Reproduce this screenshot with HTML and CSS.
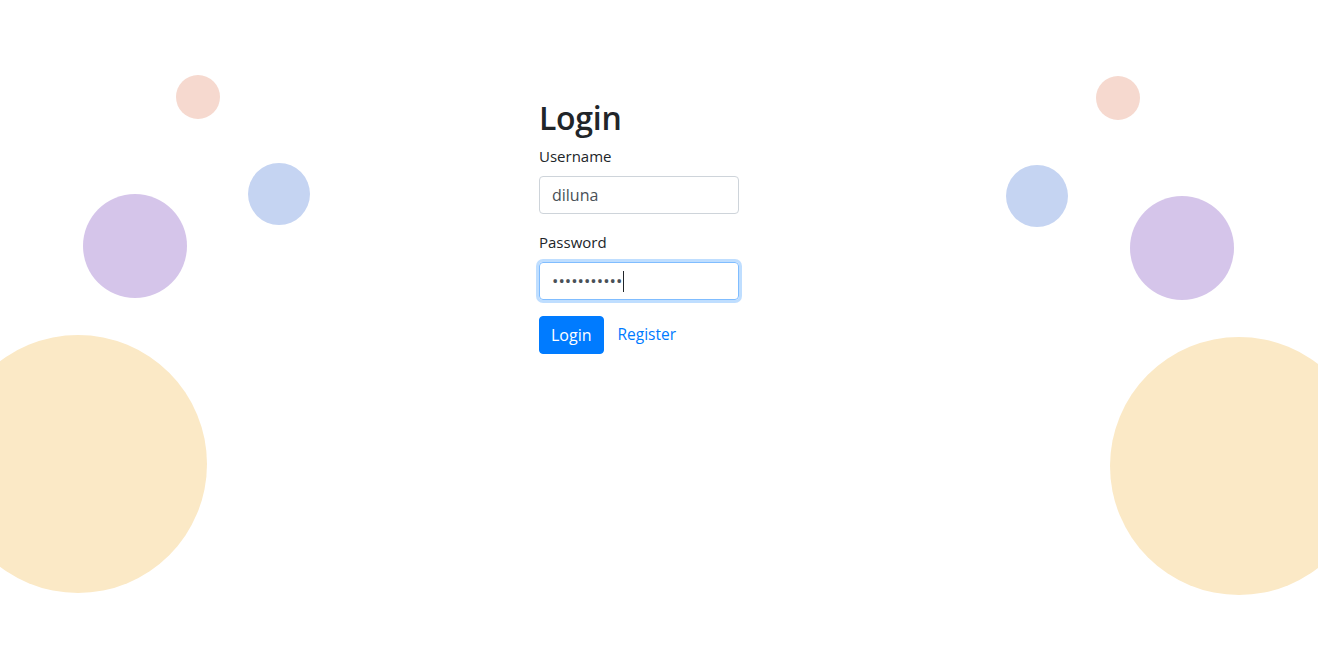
FILE: index.html
```html
<!DOCTYPE html>
<html lang="en">
<head>
<meta charset="utf-8">
<title>Login</title>
<link rel="stylesheet" href="styles.css">
</head>
<body>
<div class="decor" aria-hidden="true">
  <span class="bubble peach left-peach"></span>
  <span class="bubble blue left-blue"></span>
  <span class="bubble purple left-purple"></span>
  <span class="bubble yellow left-yellow"></span>
  <span class="bubble peach right-peach"></span>
  <span class="bubble blue right-blue"></span>
  <span class="bubble purple right-purple"></span>
  <span class="bubble yellow right-yellow"></span>
</div>
<main class="page">
  <form class="login-form">
    <h2 class="title">Login</h2>
    <div class="form-group">
      <label class="label" for="username">Username</label>
      <div class="input" id="username">diluna</div>
    </div>
    <div class="form-group">
      <label class="label" for="password">Password</label>
      <div class="input input-focus" id="password"><span class="dots">•••••••••••</span><span class="caret"></span></div>
    </div>
    <div class="actions">
      <button type="button" class="btn">Login</button>
      <a class="link" href="#">Register</a>
    </div>
  </form>
</main>
</body>
</html>
```
FILE: styles.css
```css
* { box-sizing: border-box; }
html, body { margin: 0; padding: 0; background: #fff; }
body {
  font-family: "Open Sans", "Noto Sans", "Liberation Sans", sans-serif;
  font-size: 16px;
  line-height: 1.5;
  color: #212529;
  overflow: hidden;
  height: 647px;
  position: relative;
}
.decor { position: absolute; inset: 0; pointer-events: none; }
.bubble { position: absolute; border-radius: 50%; display: block; }
.peach { background: #f6d9cf; width: 44px; height: 44px; }
.blue { background: #c5d4f2; width: 62px; height: 62px; }
.purple { background: #d5c5ea; width: 104px; height: 104px; }
.yellow { background: #fbe9c6; width: 258px; height: 258px; }
.left-peach { left: 176px; top: 75px; }
.left-blue { left: 248px; top: 163px; }
.left-purple { left: 83px; top: 194px; }
.left-yellow { left: -51px; top: 335px; }
.right-peach { left: 1096px; top: 76px; }
.right-blue { left: 1006px; top: 165px; }
.right-purple { left: 1130px; top: 196px; }
.right-yellow { left: 1110px; top: 337px; }

.page { position: relative; display: flex; justify-content: center; padding-top: 98px; }
.login-form { width: 240px; }
.title {
  margin: 0 0 8px;
  padding-top: 2px;
  font-size: 32px;
  font-weight: 600;
  line-height: 36px;
  letter-spacing: -0.3px;
}
.form-group { margin-bottom: 16px; }
.label { display: block; margin-bottom: 8px; font-size: 15px; line-height: 24px; }
.input {
  width: 200px;
  height: 38px;
  padding: 6px 12px;
  border: 1px solid #ced4da;
  border-radius: 4px;
  color: #495057;
  font-size: 16px;
  display: flex;
  align-items: center;
}
.input-focus {
  border-color: #80bdff;
  box-shadow: 0 0 0 3px rgba(0, 123, 255, 0.25);
}
.dots { font-size: 17px; letter-spacing: 0; color: #495057; }
.caret { display: inline-block; width: 1px; height: 21px; background: #212529; margin-left: 1px; }
.actions { display: flex; align-items: center; gap: 14px; }
.btn {
  height: 38px;
  padding: 0 11px;
  background: #007bff;
  color: #fff;
  border: 1px solid #007bff;
  border-radius: 4px;
  font: inherit;
  line-height: 1.5;
}
.link { color: #007bff; text-decoration: none; font-size: 15.5px; }
```
